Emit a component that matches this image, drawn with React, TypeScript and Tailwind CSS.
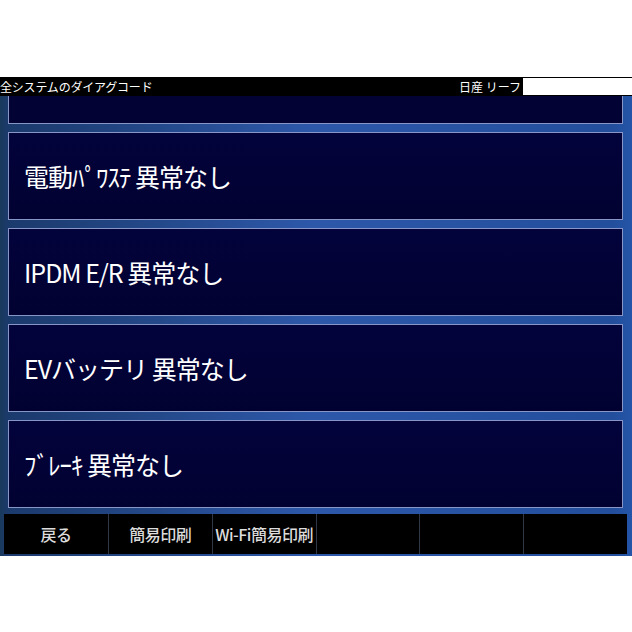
const font = { fontFamily: '"Noto Sans CJK JP", "Noto Sans", sans-serif' };

const rows = [
  'ﾃﾞｰﾀ',
  '電動ﾊﾟﾜｽﾃ 異常なし',
  'IPDM E/R 異常なし',
  'EVバッテリ 異常なし',
  'ﾌﾞﾚｰｷ 異常なし',
];

const buttons = ['戻る', '簡易印刷', 'Wi-Fi簡易印刷', '', '', ''];

export default function App() {
  return (
    <div className="w-[632px] h-[632px] bg-white" style={font}>
      <div className="h-[77px]" />

      {/* ヘッダー */}
      <div className="h-[19px] bg-black flex items-center justify-between text-white text-[12px] leading-none">
        <span className="tracking-[-0.2px]">全システムのダイアグコード</span>
        <div className="flex items-center gap-[2px] h-full">
          <span>日産 リーフ</span>
          <div className="w-[109px] h-[17px] bg-white" />
        </div>
      </div>

      {/* 結果一覧 */}
      <div className="h-[460px] flex flex-col bg-[linear-gradient(to_right,#19395c_0px,#1b3a6c_8px,#2d58aa_50%,#234e9c_97%,#2455a8_100%)]">
        <div className="flex flex-col gap-[8px] pl-[8px] pr-[9px]">
          <div className="h-[28px] border border-t-0 border-[#8796c6] bg-[#020235]" />
          {rows.slice(1).map((r) => (
            <div
              key={r}
              className="h-[88px] border border-[#8796c6] bg-[linear-gradient(to_bottom,#03033c,#010131)] flex items-center pl-[15px]"
            >
              <span className="text-white text-[25px] leading-none tracking-[-1px]">{r}</span>
            </div>
          ))}
        </div>

        {/* 下部ボタン */}
        <div className="mt-[6px] ml-[4px] mr-[5px] h-[40px] grid grid-cols-6 bg-black">
          {buttons.map((b, i) => (
            <div
              key={i}
              className={`flex items-center justify-center text-[#dcdcdc] text-[16px] leading-none font-medium tracking-[-0.5px] ${i > 0 ? 'border-l border-[#2f3646]' : ''}`}
            >
              {b}
            </div>
          ))}
        </div>
      </div>
    </div>
  );
}
